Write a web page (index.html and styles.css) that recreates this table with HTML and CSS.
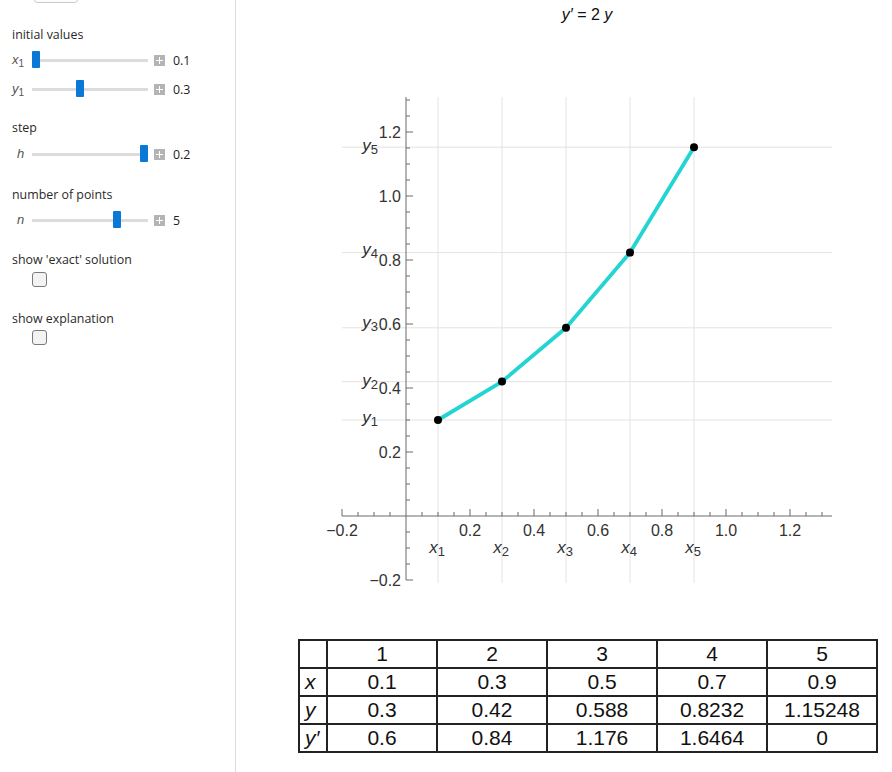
FILE: index.html
```html
<!DOCTYPE html>
<html>
<head>
<meta charset="utf-8">
<link rel="stylesheet" href="styles.css">
</head>
<body>
<div class="page">
  <aside class="sidebar">
    <div class="topbtn"></div>
    <div class="grp first">initial values</div>
    <div class="srow r-x1">
      <span class="sym">x<sub>1</sub></span>
      <div class="track"><div class="thumb" style="left:0px"></div></div>
      <span class="plus"></span>
      <span class="val">0.1</span>
    </div>
    <div class="srow r-y1">
      <span class="sym">y<sub>1</sub></span>
      <div class="track"><div class="thumb" style="left:44px"></div></div>
      <span class="plus"></span>
      <span class="val">0.3</span>
    </div>
    <div class="grp">step</div>
    <div class="srow">
      <span class="sym sym-h">h</span>
      <div class="track"><div class="thumb" style="left:108px"></div></div>
      <span class="plus"></span>
      <span class="val">0.2</span>
    </div>
    <div class="grp g-num">number of points</div>
    <div class="srow r-n">
      <span class="sym sym-h">n</span>
      <div class="track"><div class="thumb" style="left:81px"></div></div>
      <span class="plus"></span>
      <span class="val">5</span>
    </div>
    <div class="grp g-exact">show 'exact' solution</div>
    <div class="cbox"></div>
    <div class="grp g-exp">show explanation</div>
    <div class="cbox cb2"></div>
  </aside>
  <main class="main">
    <svg class="plot" width="655" height="600" viewBox="237 0 655 600">
      <text class="title" x="588" y="20" text-anchor="middle"><tspan class="it">y′</tspan> = 2 <tspan class="it">y</tspan></text>
      <g class="grid">
        <path d="M439 97V583M503 97V583M567 97V583M631 97V583M695 97V583"/>
        <path d="M343 420H833M343 381.6H833M343 327.8H833M343 252.6H833M343 147.2H833"/>
      </g>
      <g class="axis">
        <path d="M343 516H833M407 97V580"/>
        <path d="M343 516v-7M471 516v-7M535 516v-7M599 516v-7M663 516v-7M727 516v-7M791 516v-7"/>
        <path d="M359 516v-4M375 516v-4M391 516v-4M423 516v-4M439 516v-4M455 516v-4M487 516v-4M503 516v-4M519 516v-4M551 516v-4M567 516v-4M583 516v-4M615 516v-4M631 516v-4M647 516v-4M679 516v-4M695 516v-4M711 516v-4M743 516v-4M759 516v-4M775 516v-4M807 516v-4M823 516v-4"/>
        <path d="M407 580h7M407 452h7M407 388h7M407 324h7M407 260h7M407 196h7M407 132h7"/>
        <path d="M407 564h4M407 548h4M407 532h4M407 500h4M407 484h4M407 468h4M407 436h4M407 420h4M407 404h4M407 372h4M407 356h4M407 340h4M407 308h4M407 292h4M407 276h4M407 244h4M407 228h4M407 212h4M407 180h4M407 164h4M407 148h4M407 116h4M407 100h4"/>
      </g>
      <g class="ticklab">
        <text x="402" y="138" text-anchor="end">1.2</text>
        <text x="402" y="202" text-anchor="end">1.0</text>
        <text x="402" y="266" text-anchor="end">0.8</text>
        <text x="402" y="330" text-anchor="end">0.6</text>
        <text x="402" y="394" text-anchor="end">0.4</text>
        <text x="402" y="458" text-anchor="end">0.2</text>
        <text x="402" y="586" text-anchor="end">−0.2</text>
        <text x="343" y="536" text-anchor="middle">−0.2</text>
        <text x="471" y="536" text-anchor="middle">0.2</text>
        <text x="535" y="536" text-anchor="middle">0.4</text>
        <text x="599" y="536" text-anchor="middle">0.6</text>
        <text x="663" y="536" text-anchor="middle">0.8</text>
        <text x="727" y="536" text-anchor="middle">1.0</text>
        <text x="791" y="536" text-anchor="middle">1.2</text>
      </g>
      <g class="ptlab">
        <text x="438" y="553" text-anchor="middle"><tspan class="it">x</tspan><tspan class="sub" dy="3">1</tspan></text>
        <text x="502" y="553" text-anchor="middle"><tspan class="it">x</tspan><tspan class="sub" dy="3">2</tspan></text>
        <text x="566" y="553" text-anchor="middle"><tspan class="it">x</tspan><tspan class="sub" dy="3">3</tspan></text>
        <text x="630" y="553" text-anchor="middle"><tspan class="it">x</tspan><tspan class="sub" dy="3">4</tspan></text>
        <text x="694" y="553" text-anchor="middle"><tspan class="it">x</tspan><tspan class="sub" dy="3">5</tspan></text>
        <text x="379" y="151" text-anchor="end"><tspan class="it">y</tspan><tspan class="sub" dy="3">5</tspan></text>
        <text x="379" y="255" text-anchor="end"><tspan class="it">y</tspan><tspan class="sub" dy="3">4</tspan></text>
        <text x="379" y="328" text-anchor="end"><tspan class="it">y</tspan><tspan class="sub" dy="3">3</tspan></text>
        <text x="379" y="386" text-anchor="end"><tspan class="it">y</tspan><tspan class="sub" dy="3">2</tspan></text>
        <text x="379" y="423" text-anchor="end"><tspan class="it">y</tspan><tspan class="sub" dy="3">1</tspan></text>
      </g>
      <polyline class="curve" points="439,420 503,381.6 567,327.8 631,252.6 695,147.2"/>
      <g class="dots">
        <circle cx="439" cy="420" r="4"/>
        <circle cx="503" cy="381.6" r="4"/>
        <circle cx="567" cy="327.8" r="4"/>
        <circle cx="631" cy="252.6" r="4"/>
        <circle cx="695" cy="147.2" r="4"/>
      </g>
    </svg>
    <table class="tbl">
      <colgroup>
        <col class="c-hd"><col class="c-v"><col class="c-v"><col class="c-v"><col class="c-v"><col class="c-v">
      </colgroup>
      <tr><td class="hd"></td><td>1</td><td>2</td><td>3</td><td>4</td><td>5</td></tr>
      <tr><td class="hd">x</td><td>0.1</td><td>0.3</td><td>0.5</td><td>0.7</td><td>0.9</td></tr>
      <tr><td class="hd">y</td><td>0.3</td><td>0.42</td><td>0.588</td><td>0.8232</td><td>1.15248</td></tr>
      <tr><td class="hd">y′</td><td>0.6</td><td>0.84</td><td>1.176</td><td>1.6464</td><td>0</td></tr>
    </table>
  </main>
</div>
</body>
</html>
```

FILE: styles.css
```css
html, body {
  margin: 0;
  padding: 0;
  background: #fff;
}
.page {
  display: flex;
  width: 892px;
  height: 772px;
  overflow: hidden;
}
.sidebar {
  width: 236px;
  flex: none;
  border-right: 1px solid #dcdcdc;
  padding-left: 12px;
  box-sizing: border-box;
  font-family: "Open Sans", "Noto Sans", sans-serif;
  font-size: 12.4px;
  color: #2a2a2a;
}
.topbtn {
  width: 46px;
  height: 22px;
  margin-left: 21px;
  margin-top: -19px;
  border: 1px solid #c8c8c8;
  border-radius: 5px;
  box-sizing: border-box;
  background: #fdfdfd;
}
.grp {
  height: 16px;
  line-height: 16px;
  margin-top: 21px;
}
.grp.first {
  margin-top: 24px;
}
.srow {
  display: flex;
  align-items: center;
  height: 20px;
  margin-top: 8px;
}
.srow.r-x1 {
  margin-top: 7px;
}
.srow.r-y1 {
  margin-top: 9px;
}
.srow.r-n {
  margin-top: 7px;
}
.grp.g-num {
  margin-top: 23px;
}
.grp.g-exact {
  margin-top: 22px;
}
.sym {
  width: 20px;
  font-family: "Liberation Sans", sans-serif;
  font-style: italic;
  font-size: 13px;
  color: #555;
  line-height: 20px;
}
.sym sub {
  font-style: normal;
  font-size: 10px;
  vertical-align: -3px;
  line-height: 0;
}
.sym-h {
  padding-left: 5px;
  width: 15px;
}
.track {
  position: relative;
  width: 116px;
  height: 20px;
  background: linear-gradient(#dcdcdc, #dcdcdc) no-repeat 0 50% / 100% 3px;
}
.thumb {
  position: absolute;
  top: 1px;
  width: 8px;
  height: 17px;
  background: #0a78d7;
  border-radius: 1px;
}
.plus {
  position: relative;
  width: 11px;
  height: 11px;
  margin-left: 6px;
  background: #b4b4b4;
}
.plus::before,
.plus::after {
  content: "";
  position: absolute;
  background: #fff;
}
.plus::before {
  left: 2px;
  top: 5px;
  width: 7px;
  height: 1.5px;
}
.plus::after {
  left: 4.75px;
  top: 2px;
  width: 1.5px;
  height: 7px;
}
.val {
  margin-left: 8px;
  font-size: 12.4px;
  color: #222;
}
.cbox {
  width: 15px;
  height: 15px;
  margin-left: 20px;
  margin-top: 4px;
  border: 1px solid #7a7a7a;
  border-radius: 3px;
  background: #f3f3f3;
  box-sizing: border-box;
}
.grp.g-exp {
  margin-top: 24px;
}
.cbox.cb2 {
  margin-top: 3px;
}
.main {
  flex: 1;
  display: flex;
  flex-direction: column;
}
.plot {
  display: block;
  flex: none;
}
.title {
  font-family: "Liberation Sans", sans-serif;
  font-size: 16px;
  fill: #111;
}
.it {
  font-style: italic;
}
.grid path {
  stroke: #e3e3e3;
  stroke-width: 1;
  fill: none;
}
.axis path {
  stroke: #6a6a6a;
  stroke-width: 1;
  fill: none;
}
.ticklab text {
  font-family: "Liberation Sans", sans-serif;
  font-size: 16px;
  fill: #333;
}
.ptlab text {
  font-family: "Liberation Sans", sans-serif;
  font-size: 17px;
  fill: #333;
}
.ptlab .sub {
  font-size: 13px;
}
.curve {
  fill: none;
  stroke: #22d4d4;
  stroke-width: 3.8;
  stroke-linejoin: round;
}
.dots circle {
  fill: #000;
}
.tbl {
  margin-top: 39px;
  margin-left: 62px;
  width: 578px;
  table-layout: fixed;
  border-collapse: collapse;
  font-family: "Liberation Sans", sans-serif;
  font-size: 21px;
  color: #111;
}
.c-hd {
  width: 28px;
}
.c-v {
  width: 110px;
}
.tbl td {
  border: 2px solid #222;
  height: 26px;
  padding: 0;
  text-align: center;
  line-height: 26px;
  overflow: hidden;
  white-space: nowrap;
}
.tbl td.hd {
  text-align: left;
  padding-left: 5px;
  font-style: italic;
}
```
